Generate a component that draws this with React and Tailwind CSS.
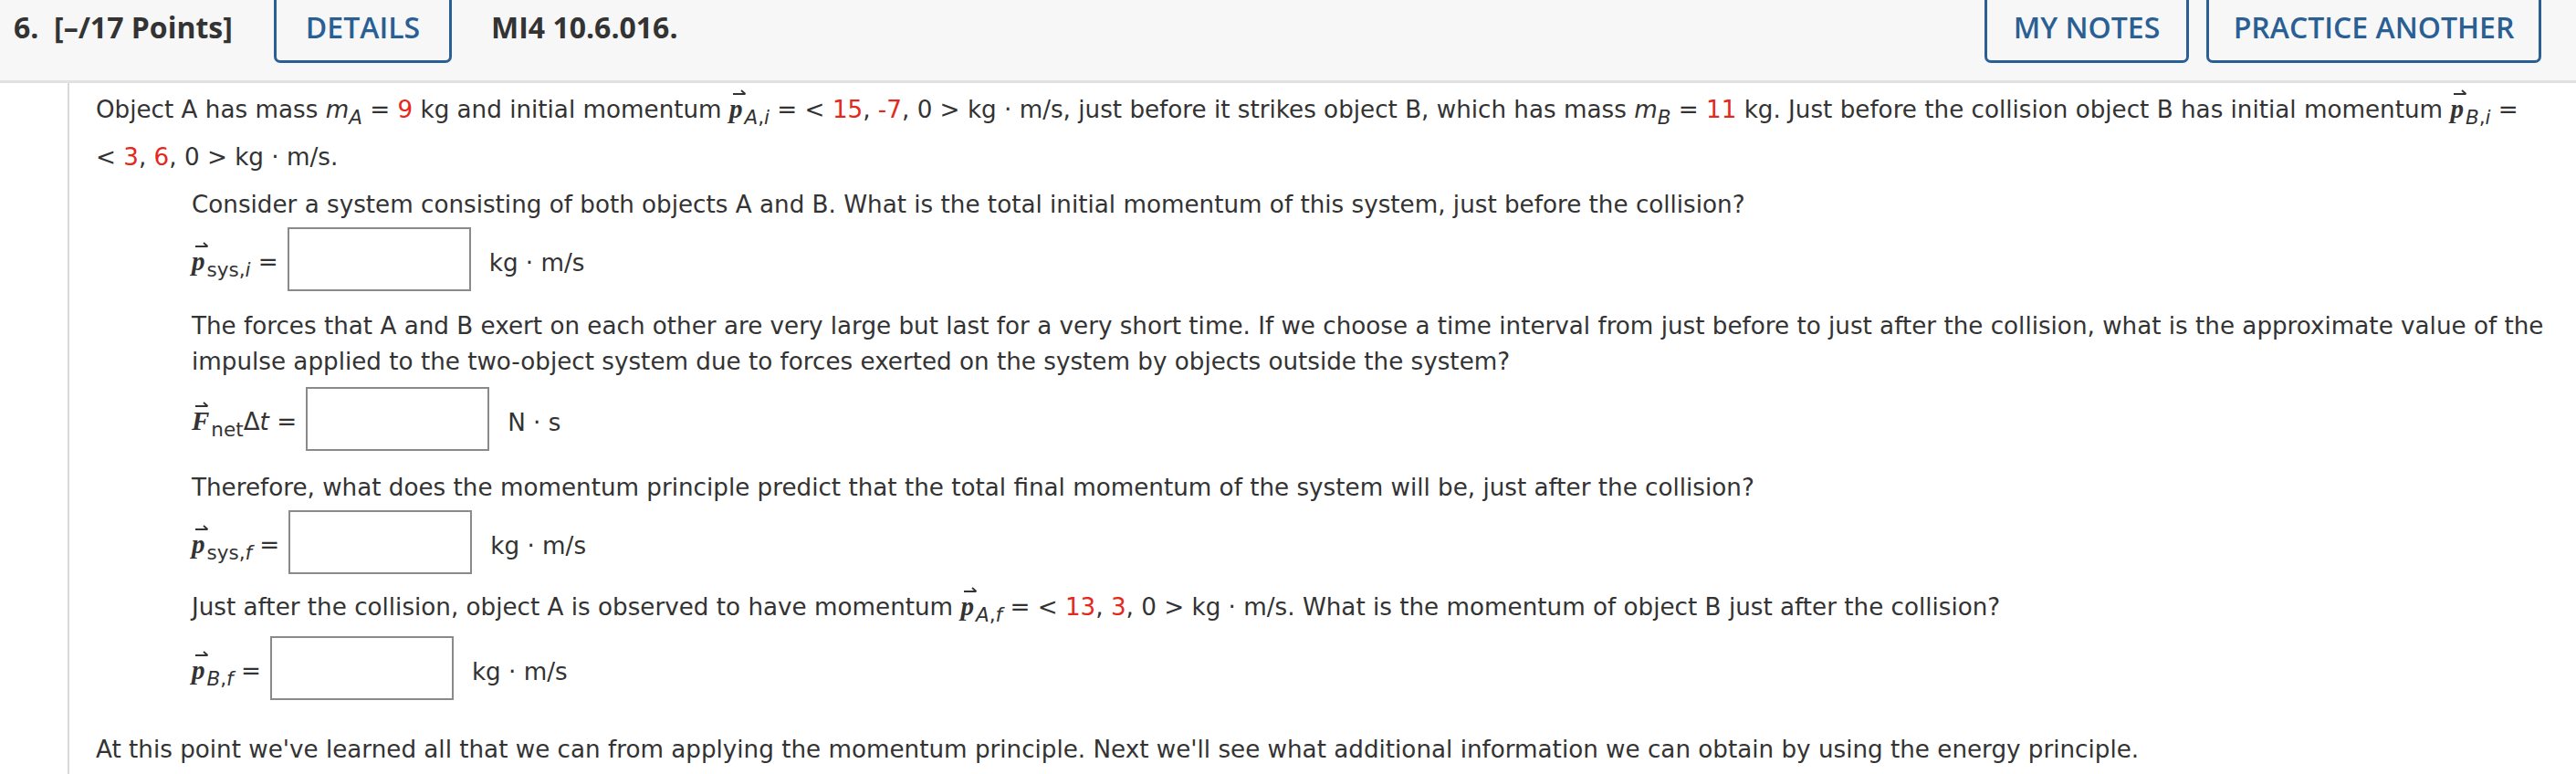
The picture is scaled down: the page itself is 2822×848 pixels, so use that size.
import React from 'react'

const Red = ({ children }) => <span className="text-[#e5281c]">{children}</span>

function Vec({ letter }) {
  return (
    <span className="relative inline-block font-['Liberation_Serif',serif] italic font-bold text-[29px] leading-none pr-[2px]">
      {letter}
      <svg className="absolute left-[3px] -top-[9px] w-[16px] h-[10px]" viewBox="0 0 16 10">
        <path d="M1 7 H14.5 M10 3 L14.5 7" stroke="#333" strokeWidth="1.8" fill="none" />
      </svg>
    </span>
  )
}

const Sub = ({ children }) => <span className="relative top-[7px] text-[21.5px]">{children}</span>

function Answer({ label, unit }) {
  return (
    <div className="flex items-center h-[70px]">
      <span className="pt-[8px] whitespace-nowrap">{label} =</span>
      <div className="ml-[10px] w-[201px] h-[70px] border-2 border-[#8a8a8a] bg-white" />
      <span className="ml-[20px] pt-[8px] whitespace-nowrap">{unit}</span>
    </div>
  )
}

function NavButton({ children, width }) {
  return (
    <div
      className={`${width} h-[69px] border-[3px] border-t-0 border-[#2a5f94] rounded-b-[7px] flex items-center justify-center pb-[7px] text-[#2a5f94] font-semibold`}
    >
      {children}
    </div>
  )
}

export default function App() {
  return (
    <div className="w-[2822px] min-h-[848px] bg-white">
      <header className="h-[91px] bg-[#f7f7f7] border-b-[3px] border-[#e1e1e1] flex items-start font-['Open_Sans',sans-serif] text-[32px] leading-[44px]">
        <div className="w-[300px] pl-[15px] pt-[8px] font-bold text-[#333] whitespace-nowrap">6.&nbsp; [–/17 Points]</div>
        <NavButton width="w-[195px]">DETAILS</NavButton>
        <div className="ml-[43px] pt-[8px] font-bold text-[#333] whitespace-nowrap">MI4 10.6.016.</div>
        <div className="flex-1" />
        <NavButton width="w-[224px]">MY NOTES</NavButton>
        <div className="w-[19px]" />
        <NavButton width="w-[367px]">PRACTICE ANOTHER</NavButton>
        <div className="w-[38px]" />
      </header>

      <main className="ml-[74px] min-h-[757px] border-l-2 border-[#d9d9d9] pl-[29px] pt-[13px] font-['DejaVu_Sans',Verdana,sans-serif] text-[26.2px] leading-[33px] text-[#333]">
        <div className="whitespace-nowrap mb-[18px]">
          Object A has mass <i>m</i><Sub><i>A</i></Sub> = <Red>9</Red> kg and initial momentum <Vec letter="p" />
          <Sub><i>A</i>,<i>i</i></Sub> = &lt; <Red>15</Red>, <Red>-7</Red>, 0 &gt; kg · m/s, just before it strikes object B, which has
          mass <i>m</i><Sub><i>B</i></Sub> = <Red>11</Red> kg. Just before the collision object B has initial momentum{' '}
          <Vec letter="p" />
          <Sub><i>B</i>,<i>i</i></Sub> =
        </div>
        <div className="whitespace-nowrap">
          &lt; <Red>3</Red>, <Red>6</Red>, 0 &gt; kg · m/s.
        </div>

        <div className="pl-[105px]">
          <div className="mt-[19px] whitespace-nowrap">
            Consider a system consisting of both objects A and B. What is the total initial momentum of this system, just before the collision?
          </div>
          <div className="mt-[8px]">
            <Answer
              label={<><Vec letter="p" /><Sub>sys,<i>i</i></Sub></>}
              unit="kg · m/s"
            />
          </div>

          <div className="mt-[22px] whitespace-nowrap">
            The forces that A and B exert on each other are very large but last for a very short time. If we choose a time interval from just before to just after the collision, what is the approximate value of the
          </div>
          <div className="mt-[6px] whitespace-nowrap">
            impulse applied to the two-object system due to forces exerted on the system by objects outside the system?
          </div>
          <div className="mt-[11px]">
            <Answer
              label={<><Vec letter="F" /><Sub>net</Sub>Δ<i>t</i></>}
              unit="N · s"
            />
          </div>

          <div className="mt-[24px] whitespace-nowrap">
            Therefore, what does the momentum principle predict that the total final momentum of the system will be, just after the collision?
          </div>
          <div className="mt-[8px]">
            <Answer
              label={<><Vec letter="p" /><Sub>sys,<i>f</i></Sub></>}
              unit="kg · m/s"
            />
          </div>

          <div className="mt-[20px] whitespace-nowrap">
            Just after the collision, object A is observed to have momentum <Vec letter="p" />
            <Sub><i>A</i>,<i>f</i></Sub> = &lt; <Red>13</Red>, <Red>3</Red>, 0 &gt; kg · m/s. What is the momentum of object B just after the collision?
          </div>
          <div className="mt-[14px]">
            <Answer
              label={<><Vec letter="p" /><Sub><i>B</i>,<i>f</i></Sub></>}
              unit="kg · m/s"
            />
          </div>
        </div>

        <div className="mt-[38px] whitespace-nowrap">
          At this point we've learned all that we can from applying the momentum principle. Next we'll see what additional information we can obtain by using the energy principle.
        </div>
      </main>
    </div>
  )
}
